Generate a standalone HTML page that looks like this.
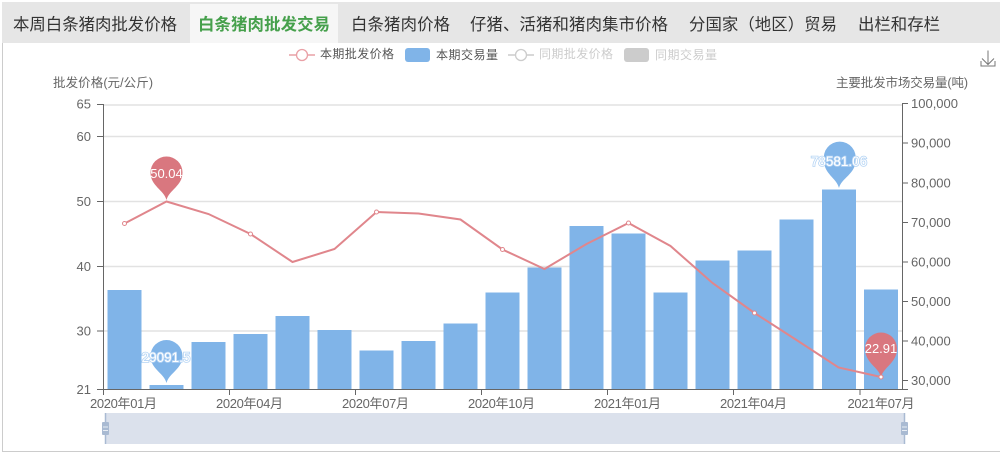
<!DOCTYPE html>
<html lang="zh">
<head>
<meta charset="utf-8">
<style>
html,body{margin:0;padding:0;background:#fff;width:1000px;height:464px;overflow:hidden}
svg{display:block;font-family:"Liberation Sans","Noto Sans CJK SC",sans-serif;filter:blur(0.35px)}
.tab{font-size:16.4px;fill:#333}
.ax{font-size:12.5px;fill:#666}
.tk{font-size:13px;fill:#666}
.lg{font-size:12px;fill:#555}
.lgo{font-size:12px;fill:#ccc}
.pin{font-size:13px;fill:#fff;text-anchor:middle}
.pinb{font-size:13.5px;fill:#fff;text-anchor:middle;stroke:#b5d4f4;stroke-width:1.6px;paint-order:stroke}
.bar{fill:#80b4e8}
.grid{stroke:#e2e2e2;stroke-width:1.5}
.axis{stroke:#666;stroke-width:1;fill:none}
</style>
</head>
<body>
<svg width="1000" height="464" viewBox="0 0 1000 464" xmlns="http://www.w3.org/2000/svg">
<rect x="0" y="0" width="1000" height="464" fill="#fff"/>
<!-- frame -->
<path d="M2.5 43V451.5H1000" fill="none" stroke="#ccc" stroke-width="1"/>
<!-- tabs -->
<rect x="2" y="2" width="998" height="41" fill="#e6e6e6"/>
<rect x="190" y="4" width="148" height="39" fill="#f6f6f6"/>
<text class="tab" x="13" y="30" textLength="164">本周白条猪肉批发价格</text>
<text class="tab" x="198" y="30" textLength="132" style="fill:#46a04c;font-weight:700">白条猪肉批发交易</text>
<text class="tab" x="351" y="30" textLength="99">白条猪肉价格</text>
<text class="tab" x="470" y="30" textLength="198">仔猪、活猪和猪肉集市价格</text>
<text class="tab" x="689" y="30" textLength="148">分国家（地区）贸易</text>
<text class="tab" x="858" y="30" textLength="82">出栏和存栏</text>
<!-- legend -->
<path d="M289 55H315" stroke="#e9a0a6" stroke-width="1.5"/>
<circle cx="302" cy="55" r="5.5" fill="#fff" stroke="#e9a0a6" stroke-width="1.3"/>
<text class="lg" x="320" y="58" textLength="74">本期批发价格</text>
<rect x="405" y="48" width="25" height="14" rx="3" fill="#80b4e8"/>
<text class="lg" x="436" y="59" textLength="62">本期交易量</text>
<path d="M508 55H534" stroke="#ccc" stroke-width="1.5"/>
<circle cx="521" cy="55" r="5.5" fill="#fff" stroke="#ccc" stroke-width="1.3"/>
<text class="lgo" x="539" y="58" textLength="74">同期批发价格</text>
<rect x="624" y="48" width="25" height="14" rx="3" fill="#ccc"/>
<text class="lgo" x="655" y="59" textLength="62">同期交易量</text>
<!-- download icon -->
<path d="M988 50.5V64M982 58.5L988 64.5L994 58.5M981 61V66H995V61" fill="none" stroke="#777" stroke-width="1"/>
<!-- axis names -->
<text class="ax" x="53" y="87" textLength="100">批发价格(元/公斤)</text>
<text class="ax" x="836" y="87" textLength="132">主要批发市场交易量(吨)</text>
<!-- grid -->
<path class="grid" d="M104 105H902M104 136.5H902M104 201.5H902M104 266.5H902M104 331H902"/>
<!-- bars -->
<g class="bar">
<rect x="107.500" y="290" width="34" height="99.500"/>
<rect x="149.500" y="385" width="34" height="4.500"/>
<rect x="191.500" y="342" width="34" height="47.500"/>
<rect x="233.500" y="334" width="34" height="55.500"/>
<rect x="275.500" y="316" width="34" height="73.500"/>
<rect x="317.500" y="330" width="34" height="59.500"/>
<rect x="359.500" y="350.500" width="34" height="39"/>
<rect x="401.500" y="341" width="34" height="48.500"/>
<rect x="443.500" y="323.500" width="34" height="66"/>
<rect x="485.500" y="292.500" width="34" height="97"/>
<rect x="527.500" y="267.500" width="34" height="122"/>
<rect x="569.500" y="226" width="34" height="163.500"/>
<rect x="611.500" y="233.500" width="34" height="156"/>
<rect x="653.500" y="292.500" width="34" height="97"/>
<rect x="695.500" y="260.500" width="34" height="129"/>
<rect x="737.500" y="250.500" width="34" height="139"/>
<rect x="779.500" y="219.500" width="34" height="170"/>
<rect x="822" y="189.500" width="34" height="200"/>
<rect x="864" y="289.500" width="34" height="100"/>
</g>
<!-- line -->
<polyline points="124.5,223.5 166.5,201.5 208.5,214 250.5,234 292.5,262 334.5,249 376.5,212 418.5,213.5 460.5,219.5 502.5,249.5 544.5,269 586.5,244 628.5,223 670.5,246 712.5,283 754.5,313 796.5,340 838.5,367.5 881,377" fill="none" stroke="#e0868c" stroke-width="2"/>
<g fill="#fff" stroke="#e0868c" stroke-width="1">
<circle cx="124.5" cy="223.5" r="2"/>
<circle cx="250.5" cy="234" r="2"/>
<circle cx="376.5" cy="212" r="2"/>
<circle cx="502.5" cy="249.5" r="2"/>
<circle cx="628.5" cy="223" r="2"/>
<circle cx="754.5" cy="313" r="2"/>
<circle cx="881" cy="377" r="2"/>
</g>
<!-- axes -->
<path class="axis" d="M103.5 104V389.5M902.5 103V389.5M97 389.5H908"/>
<path class="axis" d="M97 104.5H103.5M97 136.5H103.5M97 201.5H103.5M97 266.5H103.5M97 331H103.5"/>
<path class="axis" d="M902.5 103.5H908M902.5 143H908M902.5 183H908M902.5 222.5H908M902.5 262H908M902.5 301.5H908M902.5 341H908M902.5 380.5H908"/>
<path class="axis" d="M103.5 389.5V395M229.5 389.5V395M355.5 389.5V395M481.5 389.5V395M607.5 389.5V395M733.5 389.5V395M860 389.5V395"/>
<!-- left ticks -->
<g class="tk" text-anchor="end">
<text x="91" y="108.5">65</text>
<text x="91" y="141">60</text>
<text x="91" y="206">50</text>
<text x="91" y="271">40</text>
<text x="91" y="335.5">30</text>
<text x="91" y="394">21</text>
</g>
<!-- right ticks -->
<g class="tk">
<text x="911" y="108">100,000</text>
<text x="911" y="147.5">90,000</text>
<text x="911" y="187.5">80,000</text>
<text x="911" y="227">70,000</text>
<text x="911" y="266.5">60,000</text>
<text x="911" y="306">50,000</text>
<text x="911" y="345.5">40,000</text>
<text x="911" y="385">30,000</text>
</g>
<!-- x labels -->
<g class="tk" text-anchor="middle">
<text x="123.5" y="408" textLength="67">2020年01月</text>
<text x="249.5" y="408" textLength="67">2020年04月</text>
<text x="375.5" y="408" textLength="67">2020年07月</text>
<text x="501.5" y="408" textLength="67">2020年10月</text>
<text x="627.5" y="408" textLength="67">2021年01月</text>
<text x="753.5" y="408" textLength="67">2021年04月</text>
<text x="881" y="408" textLength="67">2021年07月</text>
</g>
<!-- pins -->
<path d="M166.5 200C164 190 150.5 186 150.5 172.5A16 16 0 1 1 182.5 172.5C182.5 186 169 190 166.5 200Z" fill="#d9777f"/>
<text class="pin" x="166.5" y="178">50.04</text>
<path d="M166.5 383C164 373 150.5 369 150.5 356A16 16 0 1 1 182.5 356C182.5 369 169 373 166.5 383Z" fill="#80b4e8"/>
<text class="pinb" x="166" y="362">29091.5</text>
<path d="M839 188C836.5 178 824 174 824 160.5A16 16 0 1 1 855.5 160.5C855.5 174 841.5 178 839 188Z" fill="#80b4e8"/>
<text class="pinb" x="839" y="166">78581.06</text>
<path d="M881 377C878.5 367 865 363 865 348.5A16 16 0 1 1 897 348.5C897 363 883.5 367 881 377Z" fill="#d9777f"/>
<text class="pin" x="881" y="353">22.91</text>
<circle cx="881" cy="377" r="2" fill="#fff" stroke="#e0868c"/>
<!-- data zoom -->
<rect x="105" y="413" width="800" height="31" fill="#dbe1ec"/>
<path d="M105.5 413V444M904.5 413V444" stroke="#a9bad2" stroke-width="1.5"/>
<rect x="102" y="422" width="7" height="13" rx="1" fill="#a9bad2"/>
<rect x="901" y="422" width="7" height="13" rx="1" fill="#a9bad2"/>
<path d="M103 427H108M103 430.5H108M902 427H907M902 430.5H907" stroke="#e8edf4" stroke-width="1"/>
</svg>
</body>
</html>
